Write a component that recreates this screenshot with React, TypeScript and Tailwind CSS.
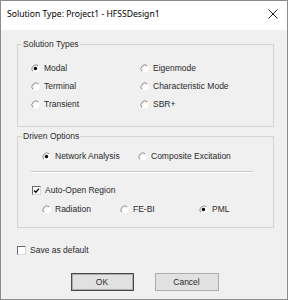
import React from 'react';

const Radio: React.FC<{ checked?: boolean }> = ({ checked }) => (
  <svg width="9" height="9" viewBox="0 0 9 9" className="shrink-0">
    <circle cx="4.5" cy="4.5" r="4" fill="#ffffff" />
    <path d="M7.3 1.7 A4 4 0 0 0 1.7 7.3" stroke="#7a7a7a" strokeWidth="0.9" fill="none" />
    <path d="M6.6 2.4 A3 3 0 0 0 2.4 6.6" stroke="#d0d0d0" strokeWidth="0.7" fill="none" />
    {checked && <circle cx="4.5" cy="4.5" r="1.7" fill="#000000" />}
  </svg>
);

const Check: React.FC<{ checked?: boolean }> = ({ checked }) => (
  <div className="w-[9px] h-[9px] shrink-0 bg-white border border-t-[#6a6a6a] border-l-[#6a6a6a] border-r-[#d8d8d8] border-b-[#d8d8d8] flex items-center justify-center">
    {checked && (
      <svg width="7" height="7" viewBox="0 0 7 7">
        <path d="M1 3.5 L2.8 5.3 L6 1.6" stroke="#000" strokeWidth="1.3" fill="none" />
      </svg>
    )}
  </div>
);

const Option: React.FC<{ label: string; checked?: boolean }> = ({ label, checked }) => (
  <div className="flex items-center gap-[4px] h-[18px]">
    <Radio checked={checked} />
    <span className="whitespace-nowrap">{label}</span>
  </div>
);

export default function App() {
  return (
    <div className="w-[288px] h-[300px] bg-[#f0f0f0] border border-[#8c8c8c] flex flex-col font-['Liberation_Sans',Arial,sans-serif] text-[8.5px] text-[#2a2a2a]">
      {/* Title bar */}
      <div className="h-[29px] bg-white flex items-center justify-between pl-[6px] pr-[9px]">
        <span className="font-['Noto_Sans',sans-serif] text-[8.6px] text-black -mt-[3px]">Solution Type: Project1 - HFSSDesign1</span>
        <svg width="10" height="10" viewBox="0 0 10 10" className="-mt-[3px]">
          <path d="M0.5 0.5 L9.5 9.5 M9.5 0.5 L0.5 9.5" stroke="#222" strokeWidth="1" />
        </svg>
      </div>

      {/* Solution Types */}
      <fieldset className="ml-[16px] mt-[9px] w-[257px] border border-[#d5d5d5] pt-[10px] pb-[13px]">
        <legend className="ml-[4px] px-[1px] leading-[10px]">Solution Types</legend>
        <div className="grid grid-cols-[109px_1fr] pl-[13px]">
          <Option label="Modal" checked />
          <Option label="Eigenmode" />
          <Option label="Terminal" />
          <Option label="Characteristic Mode" />
          <Option label="Transient" />
          <Option label="SBR+" />
        </div>
      </fieldset>

      {/* Driven Options */}
      <fieldset className="ml-[16px] mt-[4px] w-[257px] border border-[#d5d5d5] pt-[6px] pb-[9px]">
        <legend className="ml-[4px] px-[1px] leading-[10px]">Driven Options</legend>
        <div className="grid grid-cols-[96px_1fr] pl-[24px]">
          <Option label="Network Analysis" checked />
          <Option label="Composite Excitation" />
        </div>
        <div className="ml-[13px] mt-[6px] w-[222px] h-[2px] border-t border-[#c8c8c8] border-b border-b-white" />
        <div className="flex items-center gap-[4px] h-[18px] mt-[8px] pl-[14px]">
          <Check checked />
          <span>Auto-Open Region</span>
        </div>
        <div className="grid grid-cols-[78px_79px_1fr] mt-[1px] pl-[24px]">
          <Option label="Radiation" />
          <Option label="FE-BI" />
          <Option label="PML" checked />
        </div>
      </fieldset>

      {/* Save as default */}
      <div className="flex items-center gap-[4px] h-[18px] mt-[13px] pl-[16px]">
        <Check />
        <span>Save as default</span>
      </div>

      {/* Buttons */}
      <div className="flex justify-center gap-[21px] mt-[14px] pl-[1px]">
        <button className="w-[63px] h-[18px] bg-[#e1e1e1] border border-[#4a4a4a] shadow-[inset_0_0_0_1px_#adadad] text-[8.5px]">OK</button>
        <button className="w-[64px] h-[18px] bg-[#e1e1e1] border border-[#adadad] text-[8.5px]">Cancel</button>
      </div>
    </div>
  );
}
